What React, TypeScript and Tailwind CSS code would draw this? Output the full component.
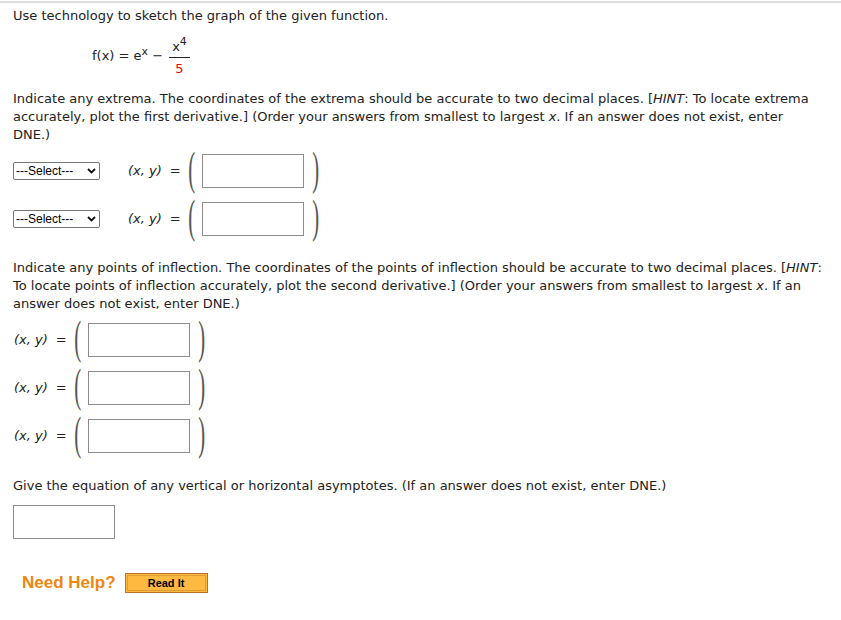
import React from 'react';

const Paren = ({ side }: { side: 'l' | 'r' }) => (
  <span className="w-[14px] h-[34px] flex items-center justify-center overflow-visible">
    <span className="inline-block text-[46px] leading-none font-['Liberation_Serif',serif] font-normal text-[#555] scale-x-[0.45] -mt-[5px]">
      {side === 'l' ? '(' : ')'}
    </span>
  </span>
);

const Coord = () => (
  <div className="flex items-center h-[34px]">
    <span className="italic">(x, y)</span>
    <span className="ml-[8px]">=</span>
    <span className="ml-[4px]"><Paren side="l" /></span>
    <div className="ml-[3px] w-[102px] h-[34px] border border-[#8c8c8c] bg-white" />
    <span className="ml-[5px]"><Paren side="r" /></span>
  </div>
);

const Select = () => (
  <div className="w-[87px] h-[18px] border border-[#767676] rounded-[2px] flex items-center justify-between pl-[2px] pr-[3px] font-['Liberation_Sans',Arial,sans-serif] text-[12px] text-black">
    <span>---Select---</span>
    <svg width="9" height="6" viewBox="0 0 9 6"><path d="M1 1l3.5 3.5L8 1" fill="none" stroke="#111" strokeWidth="1.8" /></svg>
  </div>
);

export default function App() {
  return (
    <div className="w-[841px] h-[620px] bg-white text-[#222] font-['DejaVu_Sans',Verdana,sans-serif] text-[13px] leading-[18px]">
      <div className="h-[2px] bg-[#dedede] mt-px" />
      <div className="pl-[13px] pr-[10px]">
        <p className="mt-[4px]">Use technology to sketch the graph of the given function.</p>

        {/* formula */}
        <div className="flex items-center ml-[79px] mt-[12px] h-[43px]">
          <span className="mb-[5px]">f(x) = e<sup className="text-[11px] -top-[5px]">x</sup> − </span>
          <span className="inline-flex flex-col items-center ml-[6px]">
            <span className="border-b border-[#222] px-[3px] leading-[20px]">x<sup className="text-[11px] -top-[6px]">4</sup></span>
            <span className="text-[#e00] leading-[22px]">5</span>
          </span>
        </div>

        <p className="mt-[10px] w-[806px]">
          Indicate any extrema. The coordinates of the extrema should be accurate to two decimal places. [<i>HINT</i>: To locate extrema accurately, plot the first derivative.] (Order your answers from smallest to largest <i>x</i>. If an answer does not exist, enter DNE.)
        </p>

        <div className="flex flex-col gap-[14px] mt-[10px]">
          {[0, 1].map(i => (
            <div key={i} className="flex items-center">
              <Select />
              <div className="ml-[28px]"><Coord /></div>
            </div>
          ))}
        </div>

        <p className="mt-[23px] w-[820px]">
          Indicate any points of inflection. The coordinates of the points of inflection should be accurate to two decimal places. [<i>HINT</i>: To locate points of inflection accurately, plot the second derivative.] (Order your answers from smallest to largest <i>x</i>. If an answer does not exist, enter DNE.)
        </p>

        <div className="flex flex-col gap-[14px] mt-[10px] ml-px">
          {[0, 1, 2].map(i => <Coord key={i} />)}
        </div>

        <p className="mt-[24px]">Give the equation of any vertical or horizontal asymptotes. (If an answer does not exist, enter DNE.)</p>

        <div className="mt-[10px] w-[102px] h-[34px] border border-[#8c8c8c]" />

        <div className="flex items-center mt-[34px] ml-[9px]">
          <span className="font-['Liberation_Sans',Arial,sans-serif] font-bold text-[17px] text-[#ef860f]">Need Help?</span>
          <button className="ml-[9px] w-[83px] h-[20px] bg-[#fdb940] border border-[#b8712a] p-px">
            <span className="flex items-center justify-center h-full border border-[#e39a35] font-['Liberation_Sans',Arial,sans-serif] font-bold text-[11px] text-black leading-none">Read It</span>
          </button>
        </div>
      </div>
    </div>
  );
}
